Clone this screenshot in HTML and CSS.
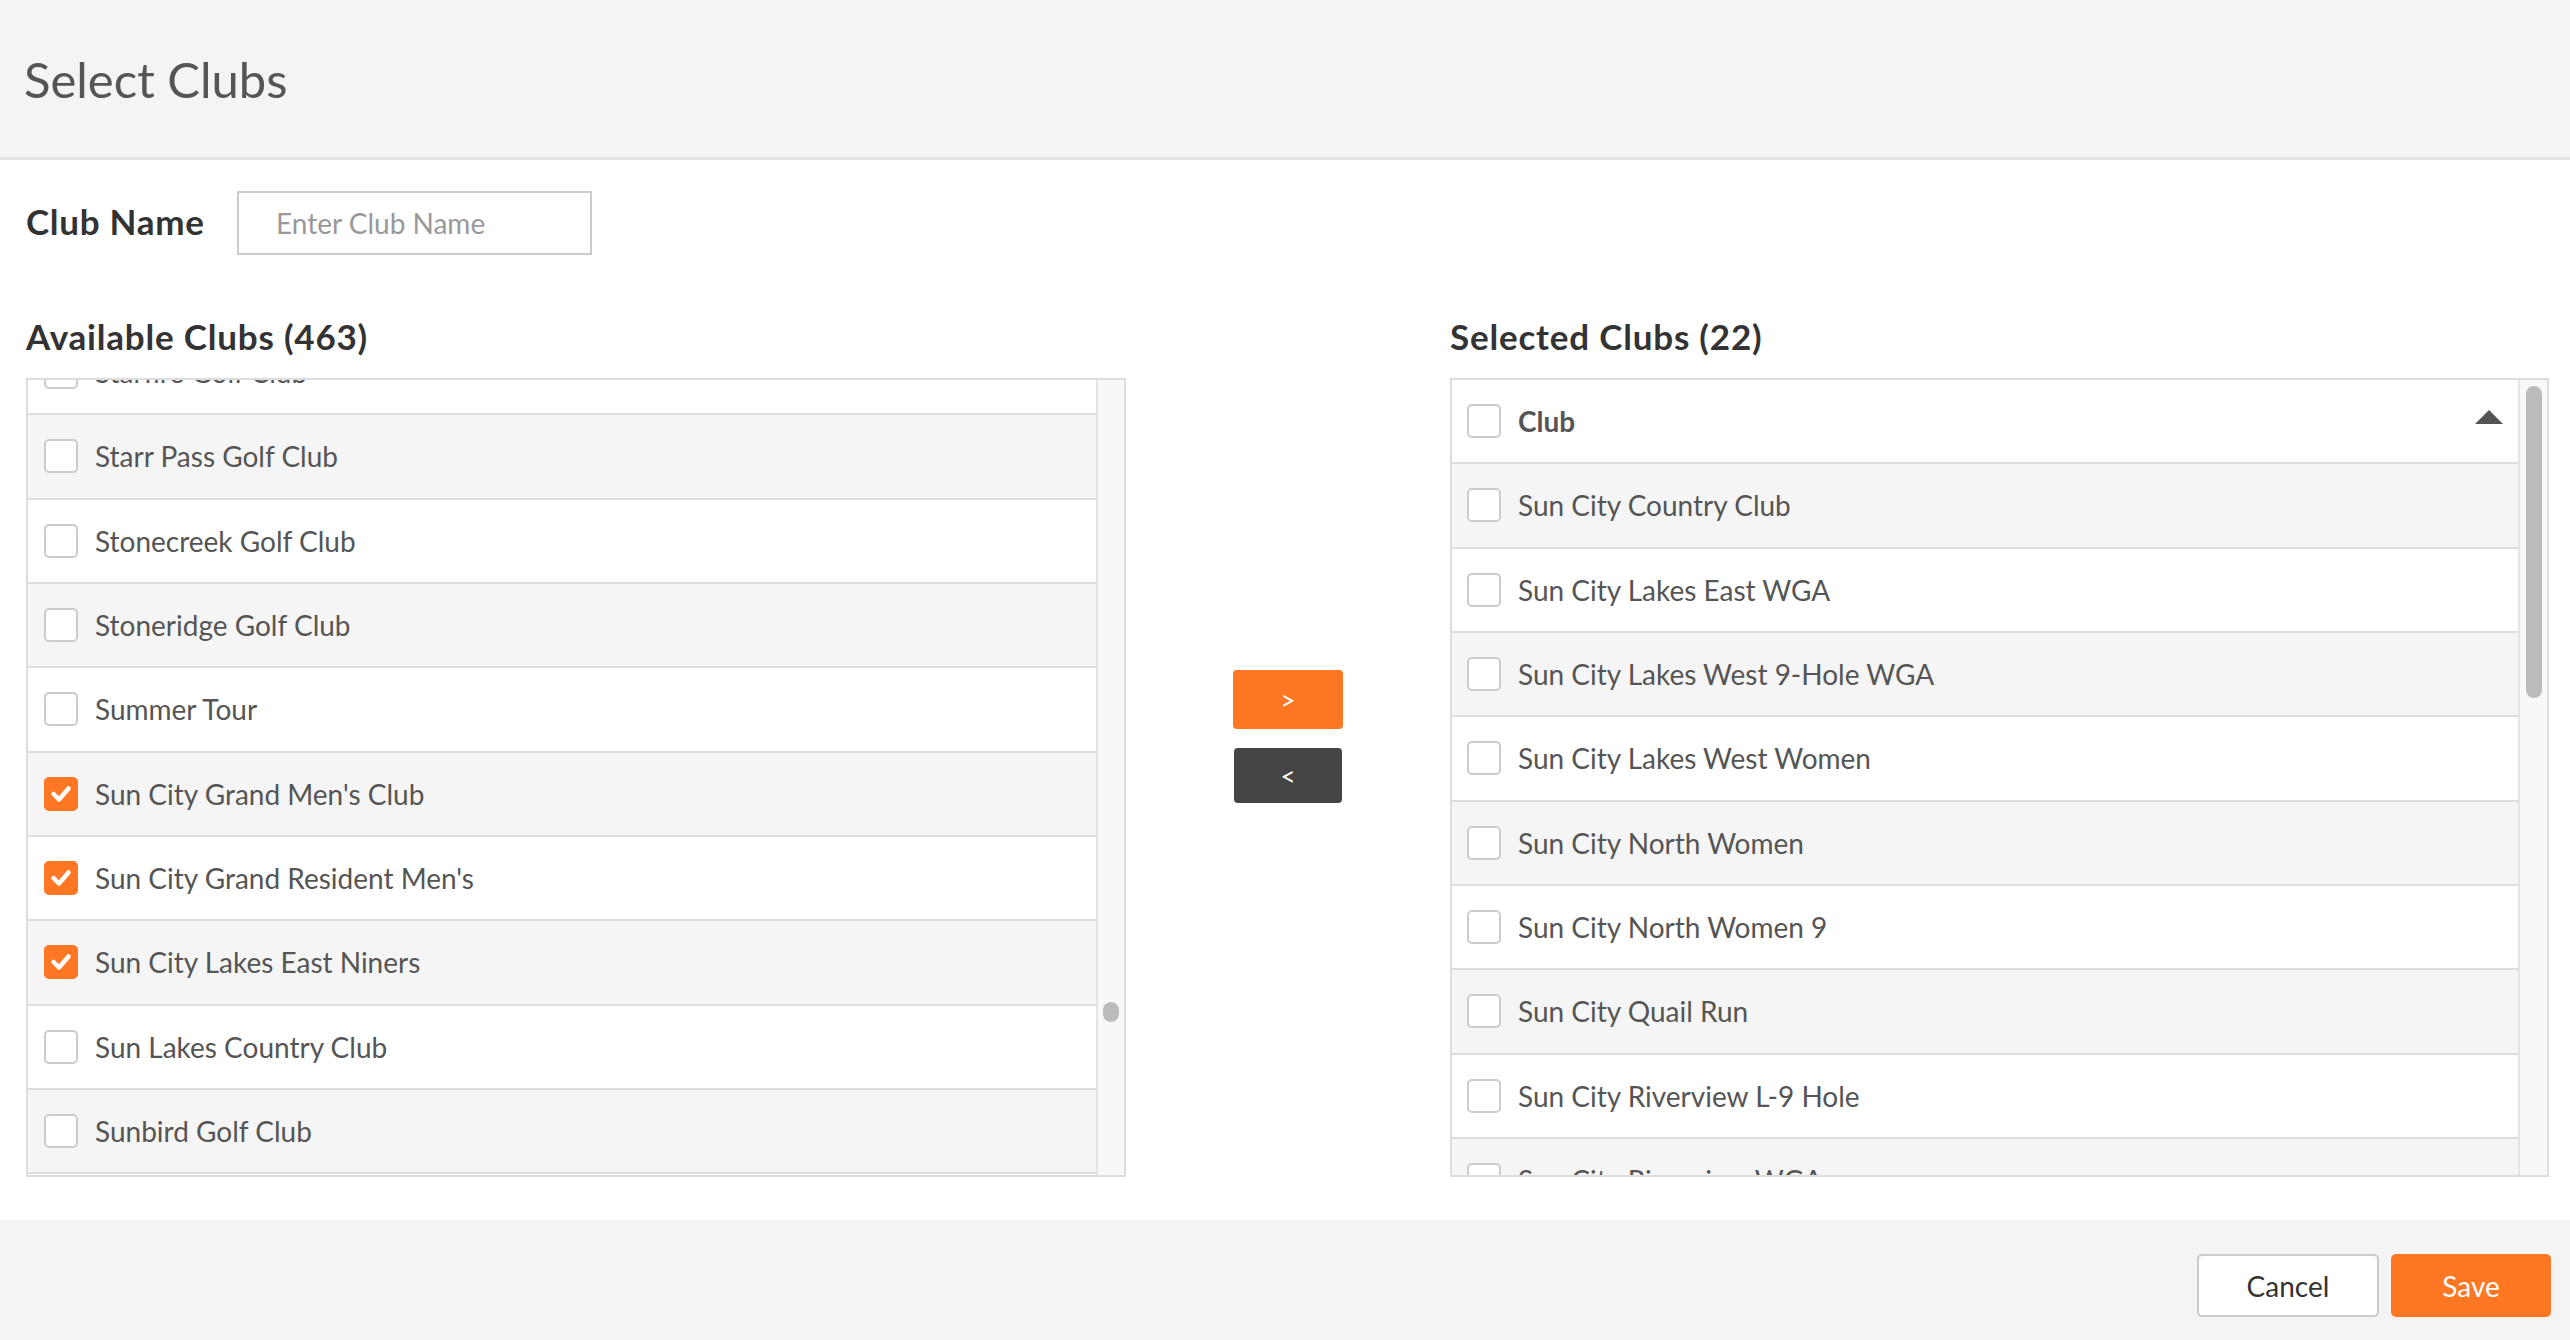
FILE: index.html
```html
<!DOCTYPE html>
<html lang="en">
<head>
<meta charset="utf-8">
<title>Select Clubs</title>
<link rel="stylesheet" href="styles.css">
</head>
<body>
<div class="page">
  <header class="header">
    <h1 class="title">Select Clubs</h1>
  </header>

  <main class="body">
    <div class="search">
      <label class="search-label" for="clubName">Club Name</label>
      <input class="search-input" id="clubName" type="text" placeholder="Enter Club Name">
    </div>

    <div class="columns">
      <h2 class="col-title">Available Clubs (463)</h2>
      <div></div>
      <h2 class="col-title">Selected Clubs (22)</h2>

      <div class="list-box">
        <div class="viewport">
          <ul class="rows rows-scrolled">
            <li class="row"><span class="cb"></span><span class="name">Starfire Golf Club</span></li>
            <li class="row"><span class="cb"></span><span class="name">Starr Pass Golf Club</span></li>
            <li class="row"><span class="cb"></span><span class="name">Stonecreek Golf Club</span></li>
            <li class="row"><span class="cb"></span><span class="name">Stoneridge Golf Club</span></li>
            <li class="row"><span class="cb"></span><span class="name">Summer Tour</span></li>
            <li class="row"><span class="cb checked"><svg viewBox="0 0 30 30"><polyline points="7.5,15 13,20.5 22.5,9.5"/></svg></span><span class="name">Sun City Grand Men's Club</span></li>
            <li class="row"><span class="cb checked"><svg viewBox="0 0 30 30"><polyline points="7.5,15 13,20.5 22.5,9.5"/></svg></span><span class="name">Sun City Grand Resident Men's</span></li>
            <li class="row"><span class="cb checked"><svg viewBox="0 0 30 30"><polyline points="7.5,15 13,20.5 22.5,9.5"/></svg></span><span class="name">Sun City Lakes East Niners</span></li>
            <li class="row"><span class="cb"></span><span class="name">Sun Lakes Country Club</span></li>
            <li class="row"><span class="cb"></span><span class="name">Sunbird Golf Club</span></li>
            <li class="row"><span class="cb"></span><span class="name">Superstition Springs Golf Club</span></li>
          </ul>
        </div>
        <div class="track"><div class="thumb thumb-left"></div></div>
      </div>

      <div class="mover">
        <button class="move move-right" type="button">&gt;</button>
        <button class="move move-left" type="button">&lt;</button>
      </div>

      <div class="list-box list-right">
        <div class="viewport">
          <ul class="rows">
            <li class="row head"><span class="cb"></span><span class="name">Club</span><span class="sort"></span></li>
            <li class="row"><span class="cb"></span><span class="name">Sun City Country Club</span></li>
            <li class="row"><span class="cb"></span><span class="name">Sun City Lakes East WGA</span></li>
            <li class="row"><span class="cb"></span><span class="name">Sun City Lakes West 9-Hole WGA</span></li>
            <li class="row"><span class="cb"></span><span class="name">Sun City Lakes West Women</span></li>
            <li class="row"><span class="cb"></span><span class="name">Sun City North Women</span></li>
            <li class="row"><span class="cb"></span><span class="name">Sun City North Women 9</span></li>
            <li class="row"><span class="cb"></span><span class="name">Sun City Quail Run</span></li>
            <li class="row"><span class="cb"></span><span class="name">Sun City Riverview L-9 Hole</span></li>
            <li class="row"><span class="cb"></span><span class="name">Sun City Riverview WGA</span></li>
            <li class="row"><span class="cb"></span><span class="name">Sun City West Men's Club</span></li>
          </ul>
        </div>
        <div class="track"><div class="thumb thumb-right"></div></div>
      </div>
    </div>
  </main>

  <footer class="footer">
    <button class="btn btn-cancel" type="button">Cancel</button>
    <button class="btn btn-save" type="button">Save</button>
  </footer>
</div>
</body>
</html>
```

FILE: styles.css
```css
* {
  box-sizing: border-box;
}

html, body {
  margin: 0;
  padding: 0;
  background: #ffffff;
}

body {
  font-family: Lato, "Open Sans", "Liberation Sans", sans-serif;
  color: #555555;
}

.page {
  display: flex;
  flex-direction: column;
  height: 1340px;
  width: 2570px;
}

/* Header */
.header {
  height: 160px;
  flex: 0 0 160px;
  background: #f4f4f4;
  border-bottom: 3px solid #e3e3e3;
  display: flex;
  align-items: center;
  padding-left: 24px;
}

.title {
  margin: 0;
  font-size: 49px;
  font-weight: 400;
  color: #555555;
  line-height: normal;
}

/* Body */
.body {
  flex: 1 1 auto;
  padding: 31px 21px 0 26px;
  background: #ffffff;
}

.search {
  display: flex;
  align-items: center;
  height: 64px;
}

.search-label {
  width: 211px;
  font-size: 35px;
  font-weight: 700;
  letter-spacing: 0.7px;
  color: #333333;
  margin-top: -4px;
}

.search-input {
  width: 355px;
  height: 64px;
  border: 2px solid #cccccc;
  border-radius: 0;
  padding: 0 0 0 37px;
  font-family: Lato, "Open Sans", sans-serif;
  font-size: 28px;
  color: #555555;
  outline: none;
  background: #ffffff;
}

.search-input::placeholder {
  color: #999999;
}

.columns {
  display: grid;
  grid-template-columns: 1100px 1fr 1099px;
  grid-template-rows: 40px 799px;
  row-gap: 22px;
  margin-top: 61px;
}

.col-title {
  margin: 0;
  font-size: 35px;
  line-height: 40px;
  font-weight: 700;
  letter-spacing: 0.8px;
  color: #333333;
}

/* Lists */
.list-box {
  display: flex;
  height: 799px;
  border: 2px solid #dddddd;
  background: #ffffff;
}

.viewport {
  flex: 1 1 auto;
  overflow: hidden;
}

.rows {
  list-style: none;
  margin: 0;
  padding: 0;
}

.rows-scrolled {
  margin-top: -49px;
}

.row {
  display: flex;
  align-items: center;
  height: 84.33px;
  border-bottom: 2px solid #dddddd;
  padding-left: 16px;
  background: #ffffff;
}

.row:nth-child(even) {
  background: #f5f5f5;
}

.list-right .row {
  padding-left: 15px;
}

.cb {
  flex: 0 0 34px;
  width: 34px;
  height: 34px;
  border: 2px solid #cccccc;
  border-radius: 5px;
  background: #ffffff;
  margin-right: 17px;
  display: flex;
}

.cb svg {
  width: 100%;
  height: 100%;
}

.cb polyline {
  fill: none;
  stroke: #ffffff;
  stroke-width: 4.5;
  stroke-linecap: round;
  stroke-linejoin: round;
}

.cb.checked {
  background: #ff7722;
  border-color: #ff7722;
}

.name {
  font-size: 28px;
  color: #555555;
  white-space: nowrap;
}

.row.head .name {
  font-weight: 700;
}

.sort {
  margin-left: auto;
  margin-right: 15px;
  margin-top: -8px;
  width: 0;
  height: 0;
  border-left: 14.5px solid transparent;
  border-right: 14.5px solid transparent;
  border-bottom: 14px solid #555555;
}

.track {
  flex: 0 0 28px;
  background: #f8f8f8;
  border-left: 2px solid #e4e4e4;
  padding-left: 5px;
}

.list-right .track {
  flex-basis: 29px;
  padding-left: 6px;
}

.thumb {
  width: 16px;
  background: #bbbbbb;
  border-radius: 8px;
}

.thumb-left {
  height: 20px;
  margin-top: 622px;
}

.thumb-right {
  height: 312px;
  margin-top: 6px;
}

/* Mover buttons */
.mover {
  display: flex;
  flex-direction: column;
  align-items: center;
  padding-top: 292px;
  gap: 19px;
}

.move {
  border: none;
  border-radius: 4px;
  color: #ffffff;
  font-family: Lato, "Open Sans", sans-serif;
  font-size: 26px;
  cursor: pointer;
  padding: 0;
}

.move-right {
  width: 110px;
  height: 59px;
  background: #ff7722;
}

.move-left {
  width: 108px;
  height: 55px;
  background: #444444;
}

/* Footer */
.footer {
  flex: 0 0 120px;
  height: 120px;
  background: #f4f4f4;
  display: flex;
  justify-content: flex-end;
  align-items: flex-start;
  gap: 12px;
  padding: 34px 19px 0 0;
}

.btn {
  height: 63px;
  border-radius: 5px;
  font-family: Lato, "Open Sans", sans-serif;
  font-size: 28px;
  cursor: pointer;
  padding: 0;
}

.btn-cancel {
  width: 182px;
  background: #ffffff;
  border: 2px solid #cccccc;
  color: #333333;
}

.btn-save {
  width: 160px;
  background: #ff7722;
  border: none;
  color: #ffffff;
}
```
